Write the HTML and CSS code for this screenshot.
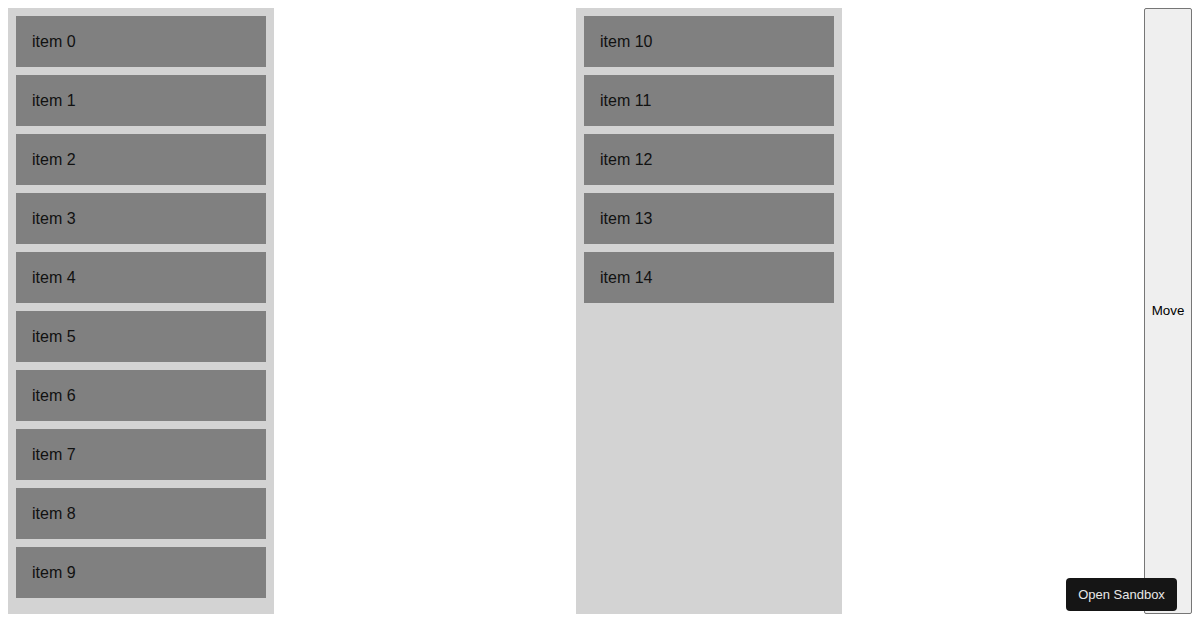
FILE: index.html
```html
<!DOCTYPE html>
<html>
<head>
<meta charset="utf-8">
<link rel="stylesheet" href="styles.css">
</head>
<body>
<div class="board">
  <div class="list">
    <div class="item">item 0</div>
    <div class="item">item 1</div>
    <div class="item">item 2</div>
    <div class="item">item 3</div>
    <div class="item">item 4</div>
    <div class="item">item 5</div>
    <div class="item">item 6</div>
    <div class="item">item 7</div>
    <div class="item">item 8</div>
    <div class="item">item 9</div>
  </div>
  <div class="list">
    <div class="item">item 10</div>
    <div class="item">item 11</div>
    <div class="item">item 12</div>
    <div class="item">item 13</div>
    <div class="item">item 14</div>
  </div>
  <button class="move">Move</button>
</div>
<button class="sandbox">Open Sandbox</button>
</body>
</html>
```
FILE: styles.css
```css
html, body {
  margin: 0;
  padding: 0;
}
body {
  margin: 8px;
  font-family: "Liberation Sans", Arial, sans-serif;
}
.board {
  display: flex;
  justify-content: space-between;
  align-items: stretch;
  height: 606px;
}
.list {
  width: 250px;
  background: #d3d3d3;
  padding: 8px;
  display: flex;
  flex-direction: column;
  gap: 8px;
}
.item {
  background: #808080;
  height: 51px;
  box-sizing: border-box;
  padding: 0 16px;
  display: flex;
  align-items: center;
  font-size: 16px;
  color: #111;
}
.move {
  width: 48px;
  margin: 0;
  padding: 0 0 2px 0;
  background: #efefef;
  border: 1px solid #767676;
  border-radius: 2px;
  font-family: "Liberation Sans", Arial, sans-serif;
  font-size: 13.33px;
  color: #000;
}
.sandbox {
  position: fixed;
  right: 23px;
  bottom: 19px;
  width: 111px;
  height: 33px;
  margin: 0;
  padding: 0;
  background: #151515;
  color: #e8e8e8;
  border: none;
  border-radius: 4px;
  font-family: "Liberation Sans", Arial, sans-serif;
  font-size: 13px;
}
```
